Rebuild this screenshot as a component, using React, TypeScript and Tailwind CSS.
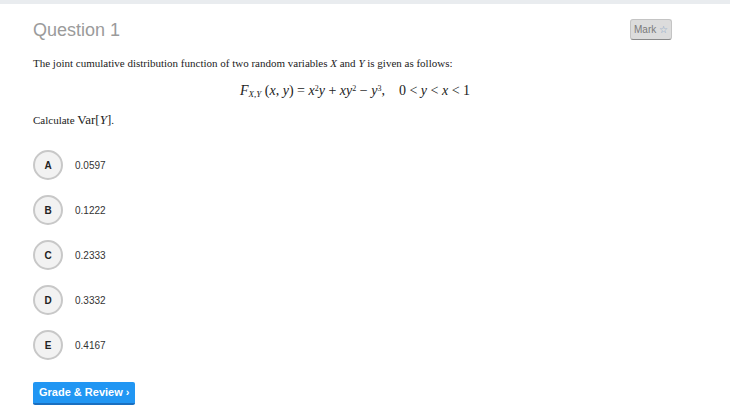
import React from "react";

const options = [
  { letter: "A", value: "0.0597" },
  { letter: "B", value: "0.1222" },
  { letter: "C", value: "0.2333" },
  { letter: "D", value: "0.3332" },
  { letter: "E", value: "0.4167" },
];

export default function App() {
  return (
    <div className="min-h-[417px] w-[730px] bg-white" style={{ fontFamily: '"Liberation Sans", Arial, sans-serif' }}>
      <div className="h-[4px] bg-[#e9ecef]" />
      <div className="pl-[33px] pr-[58px]">
        <div className="flex items-start justify-between pt-[14px]">
          <h1 className="text-[18px] leading-[24px] font-light text-[#9b9b9b]">Question 1</h1>
          <button className="mt-[1px] h-[21px] w-[42px] rounded-[3px] border border-[#c4c4c4] border-b-[#8a8a8a] bg-[#dcdcdc] text-[10px] leading-[12px] text-[#7a7a7a]">
            Mark <span className="text-[#7f9cc4]">☆</span>
          </button>
        </div>

        <div className="mt-[13px] text-[11px] text-[#222]" style={{ fontFamily: '"Liberation Serif", "Times New Roman", serif' }}>
          <p className="leading-[16px]">
            The joint cumulative distribution function of two random variables <i>X</i> and <i>Y</i> is given as follows:
          </p>
          <p className="mt-[12px] pl-[207px] text-[14px] leading-[16px]">
            <i>F</i>
            <sub className="text-[9px]"><i>X</i>,<i>Y</i></sub> (<i>x</i>, <i>y</i>) = <i>x</i>
            <sup className="text-[8px]">2</sup>
            <i>y</i> + <i>xy</i>
            <sup className="text-[8px]">2</sup> − <i>y</i>
            <sup className="text-[8px]">3</sup>,&nbsp;&nbsp;&nbsp; 0 &lt; <i>y</i> &lt; <i>x</i> &lt; 1
          </p>
          <p className="mt-[13px] leading-[16px]">
            Calculate <span className="text-[13px]">Var[<i>Y</i>]</span>.
          </p>
        </div>

        <div className="mt-[22px] flex flex-col gap-[15px]">
          {options.map((o) => (
            <div key={o.letter} className="flex items-center">
              <div className="flex h-[30px] w-[30px] items-center justify-center rounded-full border-2 border-[#c8c8c8] bg-[#f2f2f2] text-[10px] font-bold text-[#222]">
                {o.letter}
              </div>
              <span className="ml-[12px] text-[10px] text-[#333]">{o.value}</span>
            </div>
          ))}
        </div>

        <button className="mt-[22px] flex h-[23px] items-center rounded-[2px] border-b-2 border-[#1a6fc0] bg-[#2196f3] px-[6px] text-[11px] leading-[15px] font-semibold text-white">
          Grade &amp; Review ›
        </button>
      </div>
    </div>
  );
}
